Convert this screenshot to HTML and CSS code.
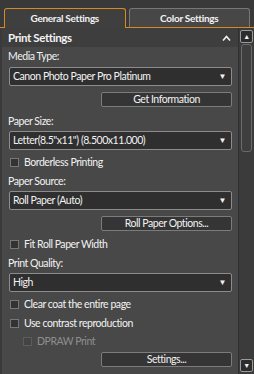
FILE: index.html
```html
<!DOCTYPE html>
<html lang="en">
<head>
  <meta charset="UTF-8" />
  <title>Print Settings</title>
  <link rel="stylesheet" href="styles.css">
</head>
<body>
  <div class="tabs">
    <div class="tab active">General Settings</div>
    <div class="tab">Color Settings</div>
  </div>
  <div class="frame">
    <div class="panel">
      <div class="panel-head">
        <span>Print Settings</span>
        <svg class="caret" width="9" height="6" viewBox="0 0 9 6"><path d="M1 5.5 L4.5 1.5 L8 5.5" fill="none" stroke="#f2f2f2" stroke-width="1.6"/></svg>
      </div>
      <div class="panel-body">
        <div class="label">Media Type:</div>
        <div class="select">Canon Photo Paper Pro Platinum<span class="arrow">&#9660;</span></div>
        <div class="btn-row"><div class="btn">Get Information</div></div>

        <div class="label">Paper Size:</div>
        <div class="select">Letter(8.5"x11") (8.500x11.000)<span class="arrow">&#9660;</span></div>
        <div class="check"><span class="box"></span>Borderless Printing</div>

        <div class="label">Paper Source:</div>
        <div class="select">Roll Paper (Auto)<span class="arrow">&#9660;</span></div>
        <div class="btn-row"><div class="btn">Roll Paper Options...</div></div>
        <div class="check"><span class="box"></span>Fit Roll Paper Width</div>

        <div class="label">Print Quality:</div>
        <div class="select">High<span class="arrow">&#9660;</span></div>
        <div class="check"><span class="box"></span>Clear coat the entire page</div>
        <div class="check"><span class="box"></span>Use contrast reproduction</div>
        <div class="check sub disabled"><span class="box"></span>DPRAW Print</div>
        <div class="btn-row"><div class="btn">Settings...</div></div>
      </div>
    </div>
    <div class="scrollbar">
      <div class="sb-btn">&#9650;</div>
      <div class="sb-track"><div class="sb-thumb"></div></div>
      <div class="sb-btn">&#9660;</div>
    </div>
  </div>
</body>
</html>
```

FILE: styles.css
```css
:root {
  --fondo: #393939;
  --panel: #484848;
  --cabecera: #3e3e3e;
  --texto: #f2f2f2;
  --naranja: #d88a22;
  --borde: #8c8c8c;
  --control: #2f2f2f;
}

body {
  margin: 0;
  width: 254px;
  height: 374px;
  overflow: hidden;
  background: var(--fondo);
  color: var(--texto);
  font-family: "Lato", "Noto Sans", sans-serif;
  font-size: 10.5px;
  letter-spacing: -0.45px;
}

.tabs {
  display: flex;
  gap: 3px;
  padding: 8px 4px 0 4px;
  border-bottom: 1px solid var(--naranja);
}

.tab {
  width: 120px;
  height: 18px;
  line-height: 19px;
  text-align: center;
  background: #474747;
  border: 1px solid #777;
  border-bottom: none;
  border-radius: 3px 3px 0 0;
  font-size: 10px;
  font-weight: 700;
  letter-spacing: -0.3px;
}

.tab.active {
  background: #3f3f3f;
  border: 1px solid var(--naranja);
  border-bottom: none;
  margin-bottom: -1px;
  height: 19px;
}

.frame {
  display: flex;
  height: 346px;
}

.panel {
  flex: 1;
  background: var(--panel);
  border-left: 2px solid #3a3a3a;
  border-right: 1px solid #303030;
}

.panel-head {
  display: flex;
  justify-content: space-between;
  align-items: center;
  height: 19px;
  padding: 0 7px 0 6px;
  background: var(--cabecera);
  font-size: 11.5px;
  font-weight: 700;
  letter-spacing: -0.4px;
}

.caret {
  margin-top: 1px;
}

.panel-body {
  padding: 1px 6px 0 6px;
}

.label {
  height: 17px;
  line-height: 17px;
}

.btn-row + .label {
  margin-top: 6px;
}

.check + .label {
  margin-top: 5px;
}

.select {
  position: relative;
  height: 17px;
  line-height: 17px;
  margin: 1px 0 0 1px;
  padding-left: 3px;
  background: var(--control);
  border: 1px solid var(--borde);
  border-radius: 2px;
}

.panel-body > .select:nth-child(2) {
  margin-top: 2px;
}

.arrow {
  position: absolute;
  right: 5px;
  top: 0;
  font-size: 8px;
}

.btn-row {
  display: flex;
  justify-content: flex-end;
  margin-top: 6px;
}

.check + .btn-row {
  margin-top: 5px;
}

.btn {
  width: 129px;
  height: 13px;
  line-height: 13px;
  text-align: center;
  background: #353535;
  border: 1px solid #7c7c7c;
  border-radius: 2px;
}

.check {
  display: flex;
  align-items: center;
  height: 12px;
  margin: 6px 0 0 2px;
}

.btn-row + .check,
.check + .check {
  margin-top: 7px;
}

.check .box {
  width: 7px;
  height: 7px;
  margin-right: 5px;
  background: #333;
  border: 1px solid #777;
}

.check.sub {
  margin-left: 15px;
  margin-top: 6px;
}

.check.disabled {
  color: #8e8e8e;
}

.check.disabled .box {
  background: #444;
  border-color: #5c5c5c;
}

.scrollbar {
  display: flex;
  flex-direction: column;
  width: 13px;
  background: #3b3b3b;
  padding: 2px 1px 2px 1px;
}

.sb-btn {
  height: 11px;
  line-height: 11px;
  text-align: center;
  font-size: 7px;
  background: #2c2c2c;
  border: 1px solid #9a9a9a;
  border-radius: 2px;
}

.sb-track {
  flex: 1;
  padding: 1px 1px;
}

.sb-thumb {
  height: 106px;
  background: #3e3e3e;
  border: 1px solid #6a6a6a;
  border-radius: 3px;
}
```
